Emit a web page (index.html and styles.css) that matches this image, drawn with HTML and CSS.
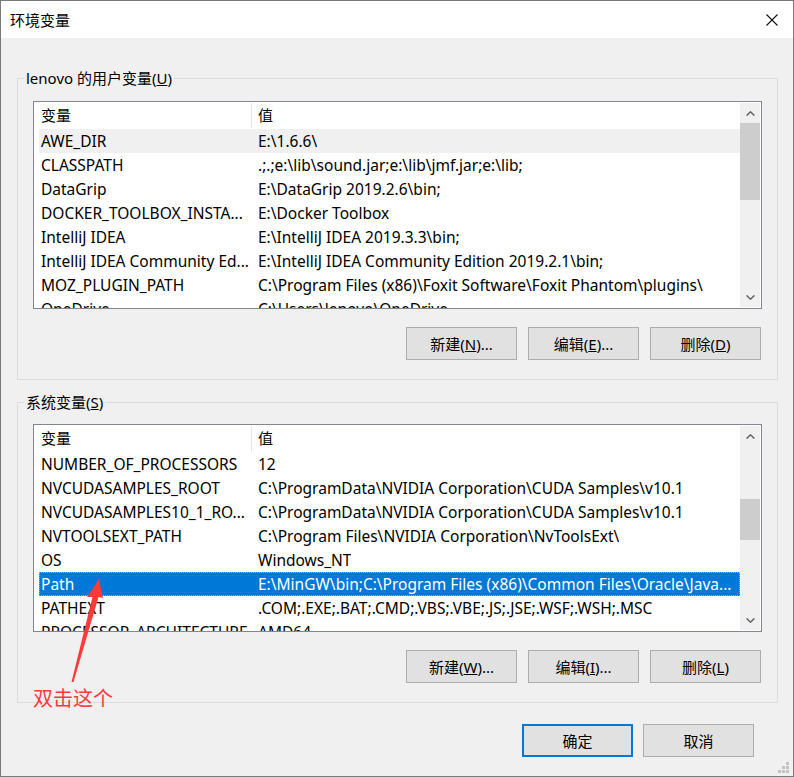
FILE: index.html
```html
<!DOCTYPE html>
<html lang="zh-CN">
<head>
    <meta charset="UTF-8">
    <title>环境变量</title>
    <link rel="stylesheet" href="styles.css">
</head>
<body>
    <div class="window">
        <div class="titlebar">
            <span class="title">环境变量</span>
            <svg class="close-icon" width="12" height="12" viewBox="0 0 12 12">
                <path d="M0.5 0.5 L11.5 11.5 M11.5 0.5 L0.5 11.5" stroke="#111" stroke-width="1.1" fill="none"/>
            </svg>
        </div>

        <div class="dialog-body">
            <!-- user variables -->
            <fieldset class="group">
                <legend>lenovo 的用户变量(<u>U</u>)</legend>
                <div class="list">
                    <div class="list-table">
                        <div class="list-head">
                            <span class="name">变量</span>
                            <span class="value">值</span>
                        </div>
                        <div class="row row-soft"><span class="name">AWE_DIR</span><span class="value">E:\1.6.6\</span></div>
                        <div class="row"><span class="name">CLASSPATH</span><span class="value">.;.;e:\lib\sound.jar;e:\lib\jmf.jar;e:\lib;</span></div>
                        <div class="row"><span class="name">DataGrip</span><span class="value">E:\DataGrip 2019.2.6\bin;</span></div>
                        <div class="row"><span class="name">DOCKER_TOOLBOX_INSTA...</span><span class="value">E:\Docker Toolbox</span></div>
                        <div class="row"><span class="name">IntelliJ IDEA</span><span class="value">E:\IntelliJ IDEA 2019.3.3\bin;</span></div>
                        <div class="row"><span class="name">IntelliJ IDEA Community Ed...</span><span class="value">E:\IntelliJ IDEA Community Edition 2019.2.1\bin;</span></div>
                        <div class="row"><span class="name">MOZ_PLUGIN_PATH</span><span class="value">C:\Program Files (x86)\Foxit Software\Foxit Phantom\plugins\</span></div>
                        <div class="row"><span class="name">OneDrive</span><span class="value">C:\Users\lenovo\OneDrive</span></div>
                    </div>
                    <div class="scrollbar">
                        <div class="arrow">
                            <svg width="9" height="5" viewBox="0 0 9 5"><path d="M0.6 4.6 L4.5 0.8 L8.4 4.6" stroke="#606060" stroke-width="1.4" fill="none"/></svg>
                        </div>
                        <div class="track">
                            <div class="thumb thumb-user"></div>
                        </div>
                        <div class="arrow">
                            <svg width="9" height="5" viewBox="0 0 9 5"><path d="M0.6 0.4 L4.5 4.2 L8.4 0.4" stroke="#606060" stroke-width="1.4" fill="none"/></svg>
                        </div>
                    </div>
                </div>
                <div class="button-row">
                    <button class="btn">新建(<u>N</u>)...</button>
                    <button class="btn">编辑(<u>E</u>)...</button>
                    <button class="btn">删除(<u>D</u>)</button>
                </div>
            </fieldset>

            <!-- system variables -->
            <fieldset class="group group-system">
                <legend>系统变量(<u>S</u>)</legend>
                <div class="list">
                    <div class="list-table">
                        <div class="list-head">
                            <span class="name">变量</span>
                            <span class="value">值</span>
                        </div>
                        <div class="row"><span class="name">NUMBER_OF_PROCESSORS</span><span class="value">12</span></div>
                        <div class="row"><span class="name">NVCUDASAMPLES_ROOT</span><span class="value">C:\ProgramData\NVIDIA Corporation\CUDA Samples\v10.1</span></div>
                        <div class="row"><span class="name">NVCUDASAMPLES10_1_RO...</span><span class="value">C:\ProgramData\NVIDIA Corporation\CUDA Samples\v10.1</span></div>
                        <div class="row"><span class="name">NVTOOLSEXT_PATH</span><span class="value">C:\Program Files\NVIDIA Corporation\NvToolsExt\</span></div>
                        <div class="row"><span class="name">OS</span><span class="value">Windows_NT</span></div>
                        <div class="row row-selected"><span class="name">Path</span><span class="value">E:\MinGW\bin;C:\Program Files (x86)\Common Files\Oracle\Java...</span></div>
                        <div class="row"><span class="name">PATHEXT</span><span class="value">.COM;.EXE;.BAT;.CMD;.VBS;.VBE;.JS;.JSE;.WSF;.WSH;.MSC</span></div>
                        <div class="row"><span class="name">PROCESSOR_ARCHITECTURE</span><span class="value">AMD64</span></div>
                    </div>
                    <div class="scrollbar">
                        <div class="arrow">
                            <svg width="9" height="5" viewBox="0 0 9 5"><path d="M0.6 4.6 L4.5 0.8 L8.4 4.6" stroke="#606060" stroke-width="1.4" fill="none"/></svg>
                        </div>
                        <div class="track">
                            <div class="thumb thumb-system"></div>
                        </div>
                        <div class="arrow">
                            <svg width="9" height="5" viewBox="0 0 9 5"><path d="M0.6 0.4 L4.5 4.2 L8.4 0.4" stroke="#606060" stroke-width="1.4" fill="none"/></svg>
                        </div>
                    </div>
                </div>
                <div class="button-row">
                    <button class="btn">新建(<u>W</u>)...</button>
                    <button class="btn">编辑(<u>I</u>)...</button>
                    <button class="btn">删除(<u>L</u>)</button>
                </div>
            </fieldset>

            <div class="footer">
                <button class="btn btn-default">确定</button>
                <button class="btn">取消</button>
            </div>
        </div>

        <svg class="grip" width="11" height="11" viewBox="0 0 11 11">
            <rect x="8" y="0" width="3" height="3" fill="#c2c2c2"/>
            <rect x="4" y="4" width="3" height="3" fill="#c2c2c2"/>
            <rect x="8" y="4" width="3" height="3" fill="#c2c2c2"/>
            <rect x="0" y="8" width="3" height="3" fill="#c2c2c2"/>
            <rect x="4" y="8" width="3" height="3" fill="#c2c2c2"/>
            <rect x="8" y="8" width="3" height="3" fill="#c2c2c2"/>
        </svg>

        <!-- red annotation drawn over the dialog -->
        <svg class="note-arrow" width="50" height="120" viewBox="0 0 50 120">
            <polygon points="39,9 43,28 38.5,27 13.5,112 11.5,112 32.5,27 27,27" fill="#fb3a3a"/>
        </svg>
        <div class="note-text">双击这个</div>
    </div>
</body>
</html>
```

FILE: styles.css
```css
:root {
    --face: #f0f0f0;
    --btn: #e1e1e1;
    --btn-border: #adadad;
    --accent: #0078d7;
    --note: #fb3a3a;
}

body {
    margin: 0;
    overflow: hidden;
    font-family: "Noto Sans", "Noto Sans CJK SC", sans-serif;
    font-size: 15px;
    color: #000;
    background: #fff;
}

.window {
    position: relative;
    width: 794px;
    height: 777px;
    box-sizing: border-box;
    border: 1px solid #7a7a7a;
    background: var(--face);
    display: flex;
    flex-direction: column;
}

.titlebar {
    height: 37px;
    background: #fff;
    display: flex;
    align-items: center;
    justify-content: space-between;
    padding: 0 15px 0 9px;
    flex-shrink: 0;
}

.title {
    font-family: "Noto Sans CJK SC", sans-serif;
    font-size: 15px;
    line-height: 20px;
}

.dialog-body {
    padding: 29px 15px 0 16px;
}

.group {
    margin: 0;
    border: 1px solid #dcdcdc;
    padding: 12px 15px 19px 15px;
    min-width: 0;
}

.group-system {
    margin-top: 11px;
    padding-top: 11px;
}

.group legend {
    margin-left: -9px;
    padding: 0 2px;
    line-height: 22px;
}

.list {
    display: flex;
    height: 208px;
    box-sizing: border-box;
    border: 1px solid #828790;
    background: #fff;
}

.list-table {
    flex: 1;
    min-width: 0;
    overflow: hidden;
    padding-left: 5px;
}

.list-head,
.row {
    display: flex;
    white-space: nowrap;
}

.list-head {
    height: 27px;
    line-height: 27px;
}

.row {
    height: 24px;
    line-height: 24px;
    font-size: 15.5px;
    box-sizing: border-box;
}

.name {
    width: 213px;
    flex-shrink: 0;
    padding-left: 2px;
    box-sizing: border-box;
    overflow: hidden;
}

.value {
    padding-left: 6px;
    overflow: hidden;
}

.list-head .name {
    border-right: 1px solid #e5e5e5;
    margin: 1px 0 1px 0;
    line-height: 25px;
}

.list-head .value {
    line-height: 27px;
}

.row-soft {
    background: #f0f0f0;
}

.row-selected {
    background: var(--accent);
    color: #fff;
    outline: 1px dotted #f0a040;
    outline-offset: -1px;
}

.scrollbar {
    width: 20px;
    margin: 1px 1px 1px 0;
    background: var(--face);
    display: flex;
    flex-direction: column;
    flex-shrink: 0;
}

.arrow {
    height: 20px;
    display: flex;
    align-items: center;
    justify-content: center;
}

.track {
    flex: 1;
}

.thumb {
    background: #cdcdcd;
}

.thumb-user {
    height: 77px;
}

.thumb-system {
    margin-top: 53px;
    height: 41px;
}

.button-row {
    display: flex;
    justify-content: flex-end;
    gap: 11px;
    margin: 18px 1px 0 0;
}

.btn {
    width: 111px;
    height: 33px;
    box-sizing: border-box;
    background: var(--btn);
    border: 1px solid var(--btn-border);
    border-radius: 0;
    font-family: "Noto Sans", "Noto Sans CJK SC", sans-serif;
    font-size: 15px;
    color: #000;
    padding: 0;
}

.btn-default {
    border: 2px solid var(--accent);
}

.footer {
    display: flex;
    justify-content: flex-end;
    gap: 10px;
    margin-top: 21px;
    padding-right: 24px;
}

.grip {
    position: absolute;
    right: 4px;
    bottom: 3px;
}

.note-arrow {
    position: absolute;
    left: 59px;
    top: 569px;
}

.note-text {
    position: absolute;
    left: 32px;
    top: 685px;
    font-family: "Noto Sans CJK SC", sans-serif;
    font-size: 20px;
    line-height: 24px;
    color: var(--note);
}
```
